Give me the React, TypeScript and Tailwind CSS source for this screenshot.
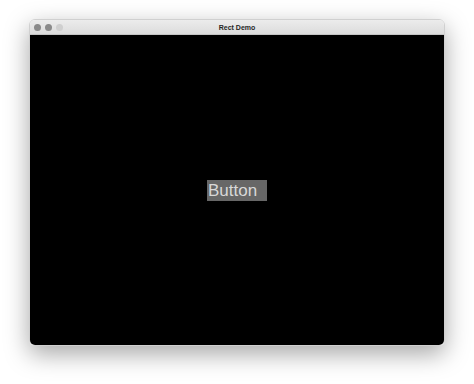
export default function App() {
  return (
    <div className="w-[474px] h-[384px] bg-white pt-[19px] pl-[29px]">
      <div className="w-[416px] h-[327px] flex flex-col rounded-[6px] overflow-hidden shadow-[0_8px_24px_rgba(0,0,0,0.35)] border border-[#d0d0d0]">
        <div className="relative h-[15px] shrink-0 flex items-center justify-center bg-gradient-to-b from-[#ececec] to-[#dcdcdc] border-b border-[#c4c4c4]">
          <div className="absolute left-[4px] top-[4px] flex gap-[4px]">
            <span className="w-[7px] h-[7px] rounded-full bg-[#8a8a8a]" />
            <span className="w-[7px] h-[7px] rounded-full bg-[#8a8a8a]" />
            <span className="w-[7px] h-[7px] rounded-full bg-[#cfcfcf]" />
          </div>
          <span className="text-[7px] font-bold text-[#262626] leading-none" style={{ fontFamily: '"Liberation Sans", Arial, sans-serif' }}>
            Rect Demo
          </span>
        </div>
        <div className="flex-1 bg-black flex items-center justify-center">
          <button
            className="w-[60px] h-[21px] bg-[#676767] text-[#d8d8d8] text-[17px] leading-[21px] text-left pl-[1px]"
            style={{ fontFamily: '"Liberation Sans", Arial, sans-serif' }}
          >
            Button
          </button>
        </div>
      </div>
    </div>
  );
}
